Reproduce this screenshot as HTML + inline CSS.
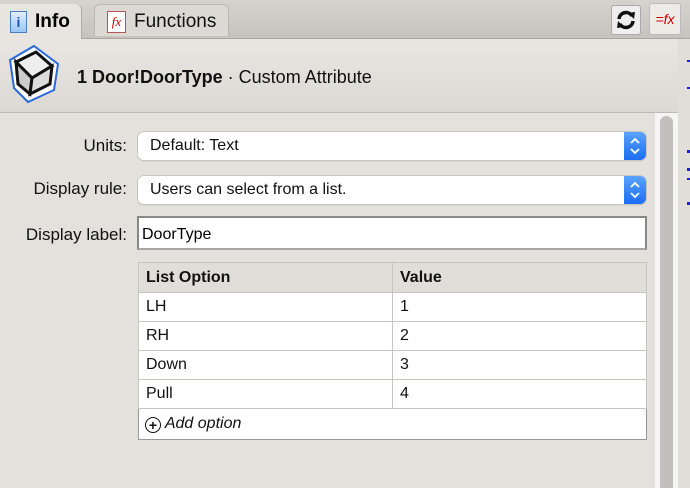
<!DOCTYPE html><html><head><style>
body{margin:0;width:690px;height:488px;overflow:hidden;background:#e4e1dc;font-family:"Liberation Sans",sans-serif;position:relative}
.a{position:absolute}
.lbl{position:absolute;right:563px;font-size:17px;color:#111}
.sel{position:absolute;left:138px;width:508px;height:28px;background:#fff;border-radius:6px;box-shadow:0 0 0 1px #c8c5c0,0 1px 1px #aaa;font-size:16px;box-sizing:border-box;padding:5px 12px;color:#111}
.sel svg{position:absolute;right:0;top:0}
table{border-collapse:collapse;font-size:16px}
td{border:1px solid #c8c5c0;height:28px;padding:0 7px;background:#fff;color:#111}
</style></head><body>
<div class="a" style="left:0;top:0;width:690px;height:38px;background:linear-gradient(#d6d3ce,#c6c3be);border-bottom:1px solid #a9a6a1"></div>
<div class="a" style="left:0;top:4px;width:81px;height:35px;background:#e8e5e0;border-radius:0 6px 0 0;border-right:1px solid #b0ada8"></div>
<div class="a" style="left:10px;top:11px;width:15px;height:20px;background:linear-gradient(#dfeeff,#9cc6f4);border:1px solid #4a7cc0;color:#1a55b0;font-size:14px;font-weight:bold;text-align:center;line-height:20px">i</div>
<div class="a" style="left:35px;top:11px;font-size:19px;font-weight:bold">Info</div>
<div class="a" style="left:94px;top:4px;width:133px;height:31px;background:#dcd9d4;border:1px solid #bbb8b3;border-bottom:none;border-radius:6px 6px 0 0"></div>
<div class="a" style="left:107px;top:11px;width:17px;height:20px;background:#fff;border:1px solid #b55;color:#c00;font-size:13px;font-style:italic;font-family:'Liberation Serif',serif;text-align:center;line-height:20px">fx</div>
<div class="a" style="left:134px;top:11px;font-size:19px;color:#111">Functions</div>
<div class="a" style="left:611px;top:5px;width:28px;height:28px;background:#eee;border:1px solid #aaa;border-radius:3px"></div>
<svg class="a" style="left:613px;top:7px" width="26" height="26"><path d="M6 12 A7 7 0 0 1 19 9" fill="none" stroke="#111" stroke-width="3.5"/><path d="M15 6 L22 5 L21 12 Z" fill="#111"/><path d="M20 14 A7 7 0 0 1 7 17" fill="none" stroke="#111" stroke-width="3.5"/><path d="M11 20 L4 21 L5 14 Z" fill="#111"/></svg>
<div class="a" style="left:649px;top:3px;width:30px;height:30px;background:#eeeae6;border:1px solid #bbb;border-radius:3px;color:#c00;font-size:14px;font-style:italic;text-align:center;line-height:30px">=fx</div>
<div class="a" style="left:0;top:39px;width:678px;height:73px;background:linear-gradient(#e9e6e1,#dcd9d4);border-bottom:1px solid #bdbab5"></div>
<svg class="a" style="left:4px;top:42px" width="58" height="62"><polygon points="6,18 30,4 54,22 50,48 24,60 10,46" fill="#fff" stroke="#2a6bdc" stroke-width="2"/><polygon points="12,20 32,10 48,24 28,36" fill="#eee" stroke="#111" stroke-width="3"/><polygon points="12,20 28,36 26,52 14,42" fill="#ccc" stroke="#111" stroke-width="3"/><polygon points="28,36 48,24 46,42 26,52" fill="#ddd" stroke="#111" stroke-width="3"/></svg>
<div class="a" style="left:77px;top:67px;font-size:18px;color:#111"><b>1 Door!DoorType</b> · Custom Attribute</div>
<div class="a" style="left:655px;top:113px;width:23px;height:375px;background:#f6f5f3"></div>
<div class="a" style="left:660px;top:116px;width:13px;height:372px;background:#c2c0bd;border-radius:7px 7px 0 0"></div>
<div class="a" style="left:678px;top:39px;width:12px;height:449px;background:#e1deda"></div>
<div class="a" style="left:687px;top:60px;width:3px;height:2px;background:#22c"></div>
<div class="a" style="left:687px;top:87px;width:3px;height:2px;background:#22c"></div>
<div class="a" style="left:687px;top:150px;width:3px;height:3px;background:#22c"></div>
<div class="a" style="left:687px;top:168px;width:3px;height:3px;background:#22c"></div>
<div class="a" style="left:687px;top:178px;width:3px;height:2px;background:#22c"></div>
<div class="a" style="left:687px;top:202px;width:3px;height:3px;background:#22c"></div>
<div class="lbl" style="top:136px">Units:</div>
<div class="sel" style="top:132px">Default: Text<svg width="22" height="28"><defs><linearGradient id="g" x1="0" y1="0" x2="0" y2="1"><stop offset="0" stop-color="#5aa2ff"/><stop offset="1" stop-color="#1a6ef0"/></linearGradient></defs><path d="M0 0H16A6 6 0 0 1 22 6V22A6 6 0 0 1 16 28H0Z" fill="url(#g)"/><path d="M7 11L11 7L15 11M7 17L11 21L15 17" fill="none" stroke="#fff" stroke-width="1.8"/></svg></div>
<div class="lbl" style="top:179px">Display rule:</div>
<div class="sel" style="top:176px">Users can select from a list.<svg width="22" height="28"><path d="M0 0H16A6 6 0 0 1 22 6V22A6 6 0 0 1 16 28H0Z" fill="url(#g)"/><path d="M7 11L11 7L15 11M7 17L11 21L15 17" fill="none" stroke="#fff" stroke-width="1.8"/></svg></div>
<div class="lbl" style="top:225px">Display label:</div>
<div class="a" style="left:137px;top:216px;width:510px;height:34px;box-sizing:border-box;background:#fff;border:2px solid #8a8884;border-bottom-color:#a8a6a2;font-size:16px;padding:8px 3px">DoorType</div>
<table class="a" style="left:138px;top:262px;width:509px">
<tr><td style="background:#e1ddd8;font-weight:bold;height:29px;width:239px">List Option</td><td style="background:#e1ddd8;font-weight:bold">Value</td></tr>
<tr><td>LH</td><td>1</td></tr><tr><td>RH</td><td>2</td></tr><tr><td>Down</td><td>3</td></tr><tr><td>Pull</td><td>4</td></tr>
<tr><td colspan="2" style="height:30px;font-style:italic;border:1px solid #999;padding-left:6px;font-size:16px"><span style="display:inline-block;width:14px;height:14px;border:1.5px solid #111;border-radius:50%;text-align:center;line-height:14px;font-style:normal;font-weight:bold;font-size:14px;vertical-align:-2px">+</span> Add option</td></tr>
</table>
</body></html>
